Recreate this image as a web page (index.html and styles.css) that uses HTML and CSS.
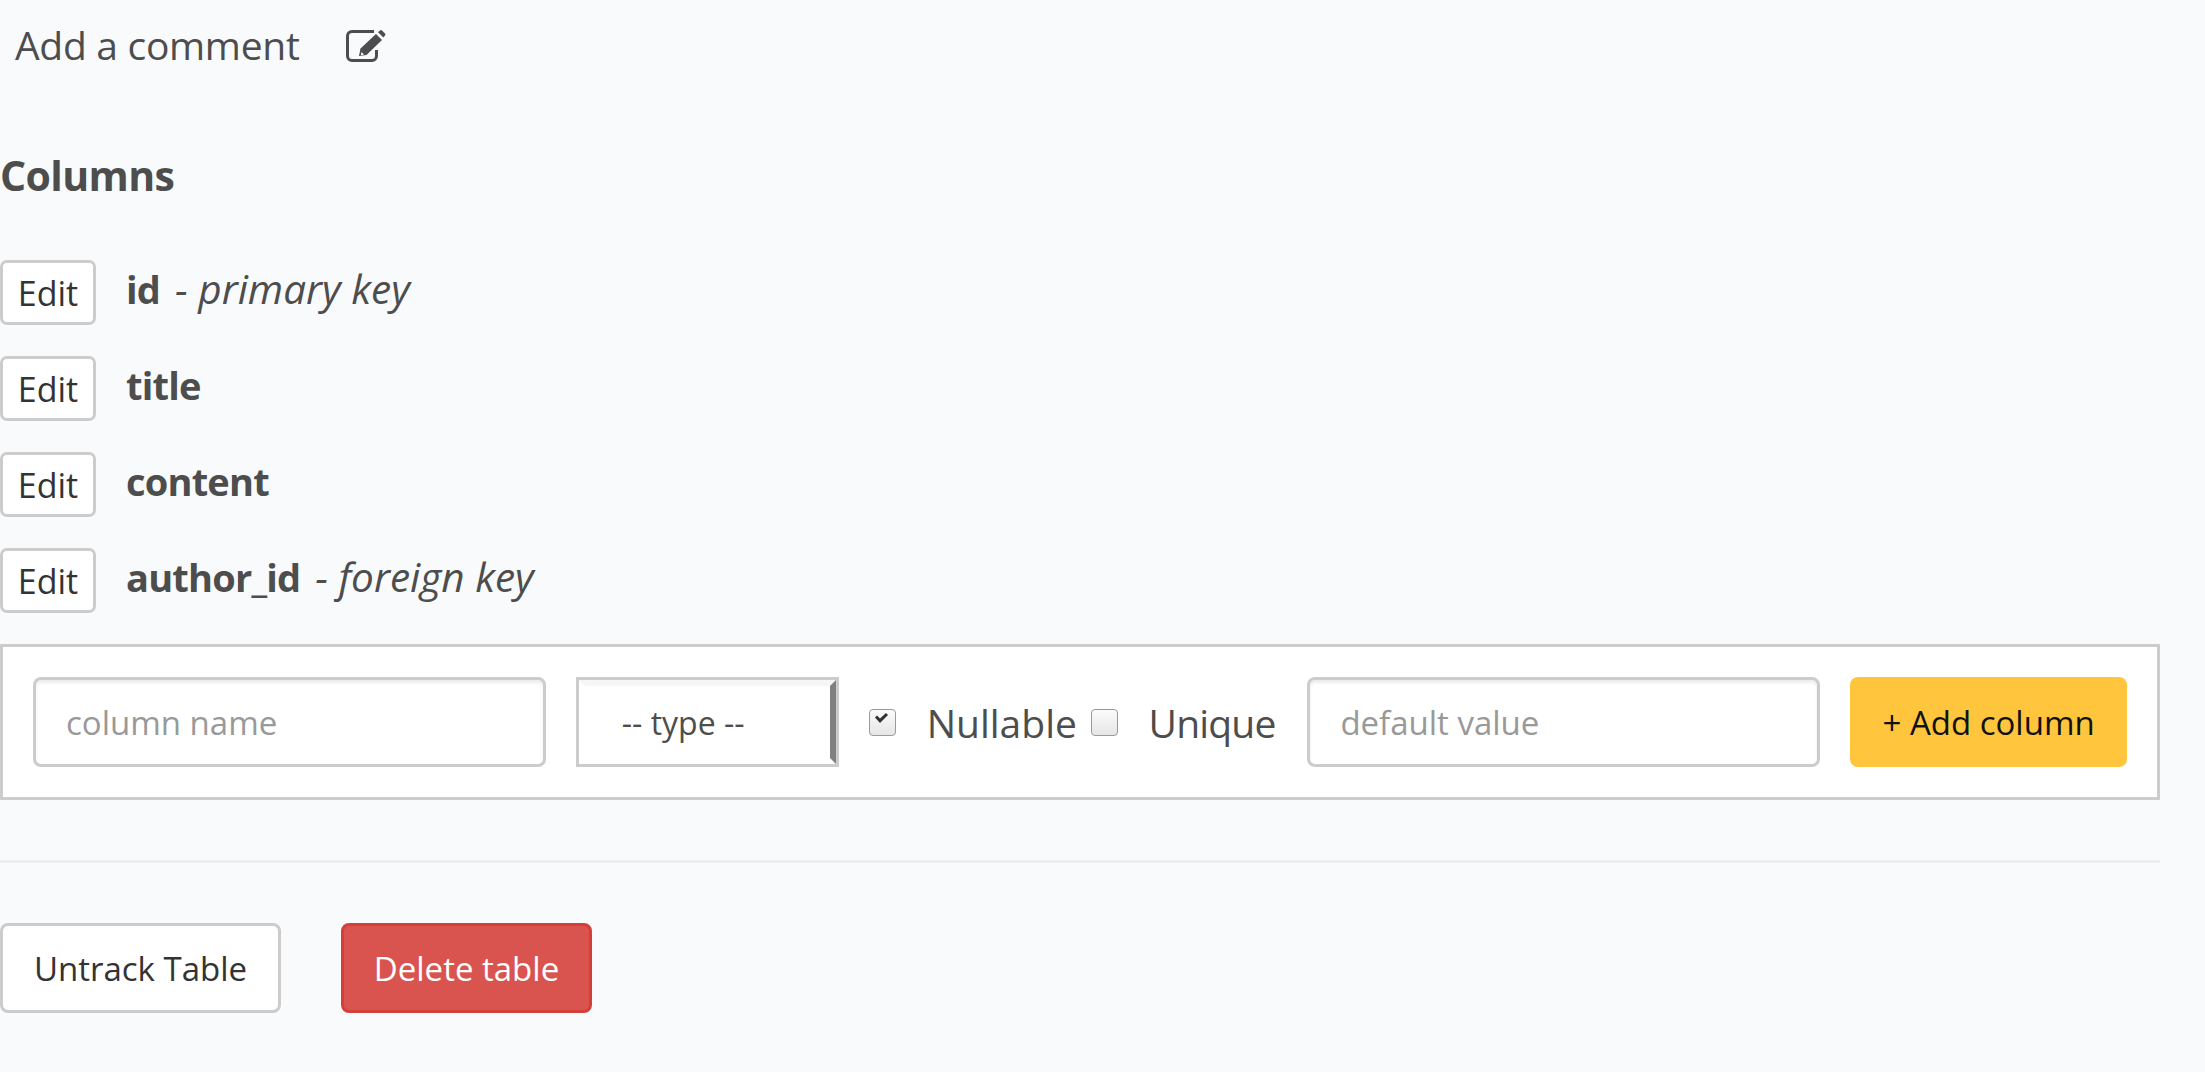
FILE: index.html
```html
<!DOCTYPE html>
<html lang="en">
<head>
  <meta charset="UTF-8" />
  <title>Table columns</title>
  <link rel="stylesheet" href="styles.css">
</head>
<body>

  <div class="comment-row">
    <span class="comment-text">Add a comment</span>
    <svg class="edit-icon" viewBox="0 0 42 34" width="42" height="34" aria-hidden="true">
      <path d="M29 2.500H7a4.500 4.500 0 0 0-4.500 4.500v20a4.500 4.500 0 0 0 4.500 4.500h20a4.500 4.500 0 0 0 4.500-4.500v-6" fill="none" stroke="#4d4d4d" stroke-width="3"/>
      <path d="M14 27l1.500-7.500L31 5l6 6-15.500 15z" fill="#4d4d4d"/>
      <path d="M16.500 23l2.500 2.500-3.200.7z" fill="#f8fafc"/>
      <path d="M33 3.200l2-1.700a1.500 1.500 0 0 1 2 0l3 3a1.500 1.500 0 0 1 0 2l-1.600 1.900z" fill="#4d4d4d"/>
    </svg>
  </div>

  <h4 class="section-title">Columns</h4>

  <div class="column-list">
    <div class="column-row">
      <button class="edit-button">Edit</button>
      <span class="column-name">id</span>
      <em class="column-note">- primary key</em>
    </div>
    <div class="column-row">
      <button class="edit-button">Edit</button>
      <span class="column-name">title</span>
    </div>
    <div class="column-row">
      <button class="edit-button">Edit</button>
      <span class="column-name">content</span>
    </div>
    <div class="column-row">
      <button class="edit-button">Edit</button>
      <span class="column-name">author_id</span>
      <em class="column-note">- foreign key</em>
    </div>
  </div>

  <form class="add-column">
    <input class="text-field" type="text" placeholder="column name">
    <div class="type-box">
      <select class="type-select">
        <option>-- type --</option>
      </select>
    </div>
    <label class="check-label nullable">
      <span class="check-box">
        <svg viewBox="0 0 20 20" width="20" height="20" aria-hidden="true">
          <path d="M3 6.500l2-2 3 3 6-5.500 2 2-8 8z" fill="#2f3236"/>
        </svg>
      </span>
      Nullable
    </label>
    <label class="check-label unique">
      <span class="check-box"></span>
      Unique
    </label>
    <input class="text-field" type="text" placeholder="default value">
    <button type="button" class="add-button">+ Add column</button>
  </form>

  <hr class="divider">

  <div class="table-actions">
    <button class="untrack-button">Untrack Table</button>
    <button class="delete-button">Delete table</button>
  </div>

</body>
</html>
```

FILE: styles.css
```css
* {
  box-sizing: border-box;
}

body {
  background-color: #f8fafc;
  font-family: 'Open Sans', 'Lato', sans-serif;
  color: #4d4d4d;
  margin: 0;
  height: 1072px;
  overflow: hidden;
}

button, input, select {
  font-family: inherit;
}

.comment-row {
  display: flex;
  align-items: center;
  height: 92px;
  padding-left: 15px;
}

.comment-text {
  font-size: 39px;
  letter-spacing: -0.3px;
  width: 330px;
  margin-top: -3px;
}

.edit-icon {
  display: block;
}

.section-title {
  margin: 63px 0 65px;
  height: 40px;
  line-height: 40px;
  font-size: 41px;
  font-weight: 700;
  letter-spacing: -0.6px;
}

.column-list {
  display: flex;
  flex-direction: column;
  gap: 31px;
}

.column-row {
  display: flex;
  align-items: center;
  height: 65px;
  padding-bottom: 8px;
  font-size: 38px;
}

.edit-button {
  width: 96px;
  height: 65px;
  padding: 0;
  margin-top: 8px;
  margin-right: 30px;
  background-color: #fff;
  border: 3px solid #ccc;
  border-radius: 7px;
  color: #333;
  font-size: 34px;
}

.column-name {
  font-weight: 700;
  letter-spacing: -0.8px;
  margin-right: 15px;
}

.column-note {
  font-size: 40.500px;
  font-style: italic;
}

.add-column {
  display: flex;
  align-items: center;
  width: 2160px;
  height: 156px;
  margin-top: 31px;
  padding: 0 30px;
  background-color: #fff;
  border: 3px solid #ccc;
}

.text-field {
  width: 513px;
  height: 90px;
  padding: 0 30px;
  border: 3px solid #ccc;
  border-radius: 8px;
  box-shadow: inset 0 3px 3px rgba(0, 0, 0, 0.075);
  color: #555;
  font-size: 33px;
}

.text-field::placeholder {
  color: #999;
  opacity: 1;
}

.type-box {
  width: 263px;
  height: 90px;
  margin: 0 30px;
  border: 3px solid #ccc;
}

.type-select {
  appearance: none;
  display: block;
  width: 100%;
  height: 100%;
  padding: 0 0 0 37px;
  border-style: solid;
  border-width: 6px;
  border-color: #f6f6f6 #808080 #fff #fff;
  border-radius: 0;
  background-color: #fff;
  color: #4d4d4d;
  font-size: 32px;
}

.check-label {
  display: flex;
  align-items: center;
  font-size: 39px;
}

.nullable {
  width: 222px;
}

.unique {
  width: 217px;
  letter-spacing: -0.8px;
}

.check-box {
  display: flex;
  justify-content: center;
  align-items: flex-start;
  width: 27px;
  height: 27px;
  margin-right: 31px;
  padding-top: 1px;
  background: linear-gradient(#fbfbfb, #e6e6e6);
  border: 1.500px solid #9a9a9a;
  border-radius: 4px;
}

.add-button {
  width: 277px;
  height: 90px;
  margin-left: 30px;
  padding: 0;
  background-color: #ffc53d;
  border: none;
  border-radius: 8px;
  color: #111;
  font-size: 33px;
}

.divider {
  width: 2160px;
  height: 3px;
  margin: 60px 0;
  background-color: #eee;
  border: none;
}

.table-actions {
  display: flex;
  gap: 60px;
}

.untrack-button,
.delete-button {
  height: 90px;
  padding: 0;
  border-radius: 8px;
  font-size: 33px;
}

.untrack-button {
  width: 281px;
  background-color: #fff;
  border: 3px solid #ccc;
  color: #333;
}

.delete-button {
  width: 251px;
  background-color: #d9534f;
  border: 3px solid #d43f3a;
  color: #fff;
}
```
